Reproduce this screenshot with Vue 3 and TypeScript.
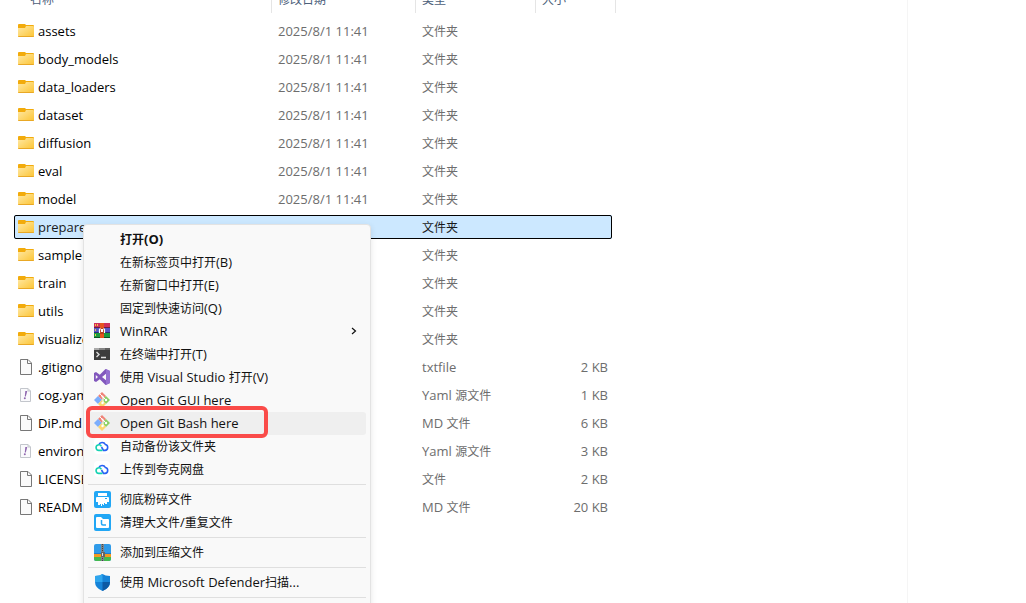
<script setup lang="ts">
type FileKind = 'folder' | 'page' | 'yaml'
interface Entry { name: string; kind: FileKind; date: string; type: string; size: string; selected?: boolean }
interface MenuItem { label: string; icon?: string; bold?: boolean; submenu?: boolean; marked?: boolean }

const stamp = '2025/8/1 11:41'
const folder = (name: string, date = stamp): Entry => ({ name, kind: 'folder', date, type: '文件夹', size: '' })
const file = (name: string, kind: FileKind, type: string, size: string): Entry => ({ name, kind, date: '', type, size })

const columns = ['名称', '修改日期', '类型', '大小']
const entries: Entry[] = [
  folder('assets'),
  folder('body_models'),
  folder('data_loaders'),
  folder('dataset'),
  folder('diffusion'),
  folder('eval'),
  folder('model'),
  { ...folder('prepare', ''), selected: true },
  folder('sample', ''),
  folder('train', ''),
  folder('utils', ''),
  folder('visualize', ''),
  file('.gitignore', 'page', 'txtfile', '2 KB'),
  file('cog.yaml', 'yaml', 'Yaml 源文件', '1 KB'),
  file('DiP.md', 'page', 'MD 文件', '6 KB'),
  file('environment', 'yaml', 'Yaml 源文件', '3 KB'),
  file('LICENSE', 'page', '文件', '2 KB'),
  file('README', 'page', 'MD 文件', '20 KB'),
]

const groups: MenuItem[][] = [
  [
    { label: '打开(O)', bold: true },
    { label: '在新标签页中打开(B)' },
    { label: '在新窗口中打开(E)' },
    { label: '固定到快速访问(Q)' },
    { label: 'WinRAR', icon: 'winrar', submenu: true },
    { label: '在终端中打开(T)', icon: 'terminal' },
    { label: '使用 Visual Studio 打开(V)', icon: 'vs' },
    { label: 'Open Git GUI here', icon: 'git' },
    { label: 'Open Git Bash here', icon: 'git', marked: true },
    { label: '自动备份该文件夹', icon: 'cloud' },
    { label: '上传到夸克网盘', icon: 'cloud' },
  ],
  [
    { label: '彻底粉碎文件', icon: 'shred' },
    { label: '清理大文件/重复文件', icon: 'clean' },
  ],
  [{ label: '添加到压缩文件', icon: 'zip' }],
  [{ label: '使用 Microsoft Defender扫描...', icon: 'shield' }],
]

// Han characters are set one size smaller than the Latin text beside them.
const runs = (text: string) =>
  (text.match(/[\u4e00-\u9fff]+|[^\u4e00-\u9fff]+/g) ?? []).map((t) => ({ t, han: /[\u4e00-\u9fff]/.test(t) }))
</script>

<template>
  <div class="explorer">
    <main class="list">
      <table>
        <colgroup><col class="c-name"><col class="c-date"><col class="c-type"><col class="c-size"></colgroup>
        <thead>
          <tr><th v-for="c in columns" :key="c" scope="col"><div class="head"><span>{{ c }}</span></div></th></tr>
        </thead>
        <tbody>
          <tr v-for="e in entries" :key="e.name" :class="{ selected: e.selected }">
            <td>
              <div class="name">
                <svg v-if="e.kind === 'folder'" width="16" height="16" viewBox="0 0 16 16" aria-hidden="true">
                  <defs>
                    <linearGradient id="fold" x1="0" y1="0" x2="1" y2="1">
                      <stop offset="0" stop-color="#ffe9a6" /><stop offset="1" stop-color="#fcc433" />
                    </linearGradient>
                  </defs>
                  <path d="M0 2Q0 1 1 1H7L8 2H15Q16 2 16 3V7H0Z" fill="#f2ab0c" />
                  <path d="M0 5H7L8 3H15Q16 3 16 4V13Q16 14 15 14H1Q0 14 0 13Z" fill="url(#fold)" />
                  <path d="M0 13H16Q16 14 15 14H1Q0 14 0 13Z" fill="#e9a825" />
                </svg>
                <svg v-else-if="e.kind === 'page'" width="16" height="16" viewBox="0 0 16 16" aria-hidden="true">
                  <path d="M2.5.5H10L13.5 4V15.5H2.5Z" fill="#fafafa" stroke="#777" />
                  <path d="M9.5.5V4.5H13.5" fill="none" stroke="#777" />
                </svg>
                <svg v-else width="16" height="16" viewBox="0 0 16 16" aria-hidden="true">
                  <path d="M2.5 1.5H10L12.5 4V14.5H2.5Z" fill="#fafafc" stroke="#c3c6cc" />
                  <path d="M10 1.5V4H12.5" fill="none" stroke="#c3c6cc" />
                  <path d="M7.3 4H9.3L7.8 9.5H6.8Z" fill="#9068b0" />
                  <circle cx="6.8" cy="11.3" r="1" fill="#9068b0" />
                </svg>
                <span>{{ e.name }}</span>
              </div>
            </td>
            <td>{{ e.date }}</td>
            <td><span v-for="(r, i) in runs(e.type)" :key="i" :class="{ han: r.han }">{{ r.t }}</span></td>
            <td class="size">{{ e.size }}</td>
          </tr>
        </tbody>
      </table>
    </main>
    <aside class="preview"></aside>

    <div class="menu" role="menu">
      <div v-for="(g, gi) in groups" :key="gi" class="group" role="group">
        <button v-for="m in g" :key="m.label" type="button" role="menuitem" class="item" :class="{ bold: m.bold, marked: m.marked }">
          <span class="icon">
            <svg v-if="m.icon === 'winrar'" width="16" height="16" viewBox="0 0 16 16" aria-hidden="true">
              <path fill="#cf2f5b" d="M0 0H16V5H0Z" /><path fill="#5557c4" d="M0 5H16V10H0Z" /><path fill="#1a9a40" d="M0 10H16V15H0Z" />
              <path fill="#6b1f42" d="M0 4H16V5H0Z" /><path fill="#2b2d75" d="M0 9H16V10H0Z" /><path fill="#0b5424" d="M0 14H16V15H0Z" />
              <path fill="#f5c443" d="M1 1H2V3H1ZM3 1H4V3H3ZM1 6H2V8H1ZM1 11H2V13H1Z" />
              <path fill="#e5541f" d="M6 0H10V15H6Z" /><path fill="#b8401c" d="M6 5H10V11H6Z" />
              <path fill="none" stroke="#fff" stroke-width="1.2" d="M5.5 10V6.5L6.5 5.5M10.5 10V6.5L9.5 5.5" /><path fill="#fff" d="M7 6H9V9H7Z" />
            </svg>
            <svg v-else-if="m.icon === 'terminal'" width="16" height="16" viewBox="0 0 16 16" aria-hidden="true">
              <path fill="#3c3c3c" d="M0 2H16V14H0Z" /><path fill="#aaa" d="M0 2H5V4H0Z" /><path fill="#858585" d="M5 2H11V4H5Z" /><path fill="#626262" d="M11 2H16V4H11Z" />
              <path d="M2.5 6L5 8.5L2.5 11M7 11.5H12" fill="none" stroke="#ddd" stroke-width="1.4" />
            </svg>
            <svg v-else-if="m.icon === 'vs'" width="16" height="16" viewBox="0 0 16 16" aria-hidden="true">
              <path fill="#8258bd" fill-rule="evenodd" d="M11.5 0L16 2V14L11.5 16L5.8 10.2L2 13L0 12V4L2 3L5.8 5.8ZM12 4.8L8 8L12 11.2ZM1.8 6V10L4 8Z" />
              <path fill="#9470d0" d="M12 0L16 2V14L12 16Z" />
            </svg>
            <svg v-else-if="m.icon === 'git'" width="16" height="16" viewBox="0 0 16 16" aria-hidden="true">
              <path fill="#f08276" d="M8 0L12 4L8 8L4 4Z" /><path fill="#7caefc" d="M4 4L8 8L4 12L0 8Z" />
              <path fill="#8bd064" d="M12 4L16 8L12 12L8 8Z" /><path fill="#fbd66e" d="M8 8L12 12L8 16L4 12Z" />
              <path d="M5.5 1.5L9 5V11M9 5L12 8" fill="none" stroke="#fff" />
              <circle cx="8.5" cy="4.5" r="1.1" fill="#fff" /><circle cx="12" cy="8" r="1.2" fill="#fff" /><circle cx="8.5" cy="11" r="1.2" fill="#fff" />
            </svg>
            <svg v-else-if="m.icon === 'cloud'" width="16" height="16" viewBox="0 0 16 16" aria-hidden="true">
              <rect width="16" height="16" rx="4" fill="#fff" />
              <path d="M4.8 6.8A3.6 3.6 0 0 1 11.4 6.5A3 3 0 0 1 11 12.4H9.5L7.5 9" fill="none" stroke="#2862f4" stroke-width="1.6" />
              <path d="M8.5 12.4H5A2.8 2.8 0 1 1 7.4 8.4" fill="none" stroke="#16d2b2" stroke-width="1.6" />
            </svg>
            <svg v-else-if="m.icon === 'shred'" width="17" height="17" viewBox="0 0 17 17" aria-hidden="true">
              <rect width="17" height="17" rx="2" fill="#22a7f5" />
              <path fill="#fff" d="M4 2H13V5H4ZM3 6H14Q15 6 15 7V11H13V10H4V11H2V7Q2 6 3 6ZM4 10H13V13H11V12H10V14H9V13H8V15H7V13H6V14H4Z" />
              <path fill="#22a7f5" d="M11 7H13V8H11Z" />
            </svg>
            <svg v-else-if="m.icon === 'clean'" width="17" height="17" viewBox="0 0 17 17" aria-hidden="true">
              <rect width="17" height="17" rx="2" fill="#22a7f5" />
              <path fill="#fff" d="M2 4Q2 3 3 3H7L9 5H14Q15 5 15 6V13Q15 14 14 14H3Q2 14 2 13Z" />
              <path d="M7.5 6V9.5Q7.5 11 9 11H12" fill="none" stroke="#22a7f5" stroke-width="1.5" />
            </svg>
            <svg v-else-if="m.icon === 'zip'" width="17" height="17" viewBox="0 0 17 17" aria-hidden="true">
              <rect width="17" height="17" rx="2" fill="#2f9be9" />
              <path fill="#f39a20" d="M0 10H17V13H0Z" /><path fill="#43b94f" d="M0 13H17V15Q17 17 15 17H2Q0 17 0 15Z" />
              <path fill="#277bc5" d="M0 9H17V10H0Z" /><path fill="#7b858d" d="M7 0H10V17H7Z" />
              <path d="M8.5 0V17" stroke="#444" stroke-dasharray="1 1" stroke-width="1" /><path fill="#666" d="M7 8H11V13H7Z" /><path fill="#ddd" d="M8 9H9V12H8Z" />
            </svg>
            <svg v-else-if="m.icon === 'shield'" width="17" height="17" viewBox="0 0 17 17" aria-hidden="true">
              <path fill="#1683d8" d="M8.5 0Q11 2 16 2V8Q16 14 8.5 17Q1 14 1 8V2Q6 2 8.5 0Z" />
              <path fill="#2fa6ee" d="M8.5 0V8H1V2Q6 2 8.5 0Z" /><path fill="#0c59a4" d="M8.5 8H16Q16 14 8.5 17Z" />
            </svg>
          </span>
          <span class="label"><span v-for="(r, i) in runs(m.label)" :key="i" :class="{ han: r.han }">{{ r.t }}</span></span>
          <svg v-if="m.submenu" class="arrow" width="6" height="8" viewBox="0 0 6 8" aria-hidden="true"><path d="M1 1L4.5 4L1 7" fill="none" stroke="#111" stroke-width="1.2" /></svg>
        </button>
      </div>
    </div>
  </div>
</template>

<style>
body { margin: 0; background: #fff; }
</style>

<style scoped>
.explorer {
  position: relative;
  display: flex;
  height: 100vh;
  overflow: hidden;
  background: #fff;
  color: #000;
  font-family: "Open Sans", "Noto Sans CJK SC", sans-serif;
  font-size: 13px;
  line-height: 20px;
}
.list { flex: 1; min-width: 0; padding-left: 14px; }
.preview { width: 118px; border-left: 1px solid #f5f5f5; }
.han { font-family: "Noto Sans CJK SC", sans-serif; font-size: 12px; line-height: 16px; }
table { table-layout: fixed; width: 598px; margin-top: -4px; border-spacing: 0 4px; }
.c-name { width: 258px; }
.c-date { width: 144px; }
.c-type { width: 120px; }
.c-size { width: 76px; }
th { height: 15px; padding: 0; vertical-align: top; font-weight: 400; text-align: left; }
.head {
  box-sizing: border-box;
  display: flex;
  align-items: flex-end;
  height: 13px;
  padding: 0 6px 4px;
  overflow: hidden;
  border-right: 1px solid #e5e5e5;
  color: #4c607a;
  font-family: "Noto Sans CJK SC", sans-serif;
  font-size: 12px;
}
th:first-child .head { padding-left: 16px; }
th:last-child .head { width: calc(100% + 4px); }
td { height: 24px; padding: 0 4px 0 6px; color: #6d6d6d; white-space: nowrap; }
td:first-child { padding: 0 4px; color: #000; }
.size { text-align: right; }
.name { display: flex; align-items: center; gap: 4px; }
.name svg { flex: none; }
.selected { background: #cce8ff; outline: 1px solid #000; outline-offset: -1px; border-radius: 2px; }
.selected td { color: #1a1a1a; }
.menu {
  position: absolute;
  top: 224px;
  left: 83px;
  box-sizing: border-box;
  width: 288px;
  padding: 3px 4px 16px;
  border: 1px solid #e3e3e3;
  border-radius: 4px;
  background: #f9f9f9;
  box-shadow: 0 2px 6px rgba(0, 0, 0, 0.1);
}
.group::after { content: ""; display: block; height: 1px; margin: 3px 0; background: #dfdfdf; }
.item {
  position: relative;
  display: flex;
  align-items: center;
  gap: 10px;
  width: 100%;
  height: 23px;
  padding: 0 9px 1px 6px;
  border: 0;
  border-radius: 3px;
  background: none;
  color: #111;
  font: inherit;
  text-align: left;
  white-space: nowrap;
}
.icon { display: flex; width: 16px; }
.icon svg { flex: none; }
.label { flex: 1; }
.bold { font-weight: 700; }
.marked { background: #efefef; }
.marked::after {
  content: "";
  position: absolute;
  inset: -6px 98px -3px -2px;
  z-index: 1;
  border: 4px solid #fa4b49;
  border-radius: 6px;
}
</style>
